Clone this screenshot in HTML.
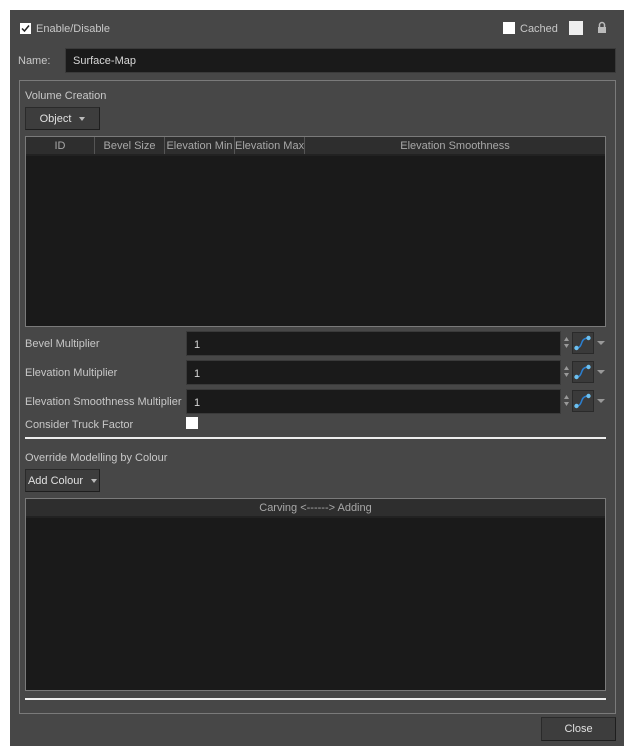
<!DOCTYPE html>
<html><head><style>
*{box-sizing:border-box;margin:0;padding:0}
body{width:634px;height:756px;background:#fff;font-family:"Liberation Sans",sans-serif;font-size:11px;color:#c8c8c8;position:relative;overflow:hidden}
.a{position:absolute}
.t{margin-top:1px}
.panel{left:10px;top:10px;width:614px;height:736px;background:#474747}
.inp{background:#1a1a1a;border:1px solid #3a3a3a;color:#d8d8d8;padding-left:7px;line-height:24px}
.btn{background:#3d3d3d;border:1px solid #2a2a2a;border-bottom-color:#1e1e1e;border-right-color:#1e1e1e;color:#e0e0e0;text-align:center;line-height:22px}
.arr{display:inline-block;width:0;height:0;border-left:3px solid transparent;border-right:3px solid transparent;border-top:4px solid #bbb;vertical-align:middle;margin-left:8px}
.tbl{background:#1a1a1a;border:1px solid #7a7a7a}
.hd{background:#2e2e2e;height:19px;border-bottom:2px solid #222;display:flex;color:#a8a8a8}
.hd div{border-right:1px solid #555;text-align:center;line-height:19px;overflow:hidden;white-space:nowrap}
</style></head><body>
<div class="a panel"></div>
<div class="a" style="left:20px;top:23px;width:11px;height:11px;background:#fff"></div>
<svg class="a" style="left:20px;top:23px" width="11" height="11"><path d="M2 5.5 L4.5 8 L9 2.5" stroke="#222" stroke-width="1.5" fill="none"/></svg>
<div class="a" style="left:36px;top:23px">Enable/Disable</div>
<div class="a" style="left:503px;top:22px;width:12px;height:12px;background:#fff"></div>
<div class="a" style="left:520px;top:23px">Cached</div>
<div class="a" style="left:569px;top:21px;width:14px;height:14px;background:#eee"></div>
<svg class="a" style="left:597px;top:21px" width="10" height="13"><path d="M2.5 6 V4 a2.5 2.5 0 0 1 5 0 V6" stroke="#bbb" stroke-width="1.5" fill="none"/><rect x="1" y="6" width="8" height="6" fill="#bbb"/></svg>
<div class="a" style="left:18px;top:55px">Name:</div>
<div class="a inp" style="left:65px;top:48px;width:551px;height:25px">Surface-Map</div>
<div class="a" style="left:19px;top:80px;width:597px;height:634px;border:1px solid #7a7a7a"></div>
<div class="a" style="left:25px;top:90px">Volume Creation</div>
<div class="a btn" style="left:25px;top:107px;width:75px;height:23px">Object<span class="arr"></span></div>
<div class="a tbl" style="left:25px;top:136px;width:581px;height:191px">
<div class="hd"><div style="width:69px">ID</div><div style="width:70px">Bevel Size</div><div style="width:70px">Elevation Min</div><div style="width:70px">Elevation Max</div><div style="flex:1;border-right:none">Elevation Smoothness</div></div>
</div>
<div class="a" style="left:25px;top:338px">Bevel Multiplier</div>
<div class="a" style="left:25px;top:367px">Elevation Multiplier</div>
<div class="a" style="left:25px;top:396px">Elevation Smoothness Multiplier</div>
<div class="a" style="left:25px;top:419px">Consider Truck Factor</div>
<div class="a inp" style="left:186px;top:331px;width:375px;height:25px;line-height:26px">1</div>
<div class="a inp" style="left:186px;top:360px;width:375px;height:25px;line-height:26px">1</div>
<div class="a inp" style="left:186px;top:389px;width:375px;height:25px;line-height:26px">1</div>
<div class="a" style="left:186px;top:417px;width:12px;height:12px;background:#fff"></div>
<svg class="a" style="left:562px;top:331px" width="46" height="84">
<g id="r"><path d="M2 10 L4.5 6 L7 10Z M2 13 L4.5 17 L7 13Z" fill="#999"/><rect x="10.5" y="1.5" width="21" height="21" fill="#3a3a3a" stroke="#2a2a2a"/><path d="M14.5 17 C18 17 19 14 20 11 C21 8 23 7 26.5 7" stroke="#2b7fd0" stroke-width="1.5" fill="none"/><circle cx="14.5" cy="17" r="2.2" fill="#6cc0f0"/><circle cx="26.5" cy="7" r="2.2" fill="#6cc0f0"/><path d="M35 10 L43 10 L39 14Z" fill="#999"/></g>
<use href="#r" y="29"/><use href="#r" y="58"/>
</svg>
<div class="a" style="left:25px;top:437px;width:581px;height:2px;background:#eee"></div>
<div class="a" style="left:25px;top:452px">Override Modelling by Colour</div>
<div class="a btn" style="left:25px;top:469px;width:75px;height:23px">Add Colour<span class="arr"></span></div>
<div class="a tbl" style="left:25px;top:498px;width:581px;height:193px">
<div class="hd"><div style="flex:1;border-right:none">Carving &lt;------&gt; Adding</div></div>
</div>
<div class="a" style="left:25px;top:698px;width:581px;height:2px;background:#eee"></div>
<div class="a btn" style="left:541px;top:717px;width:75px;height:24px">Close</div>
</body></html>
